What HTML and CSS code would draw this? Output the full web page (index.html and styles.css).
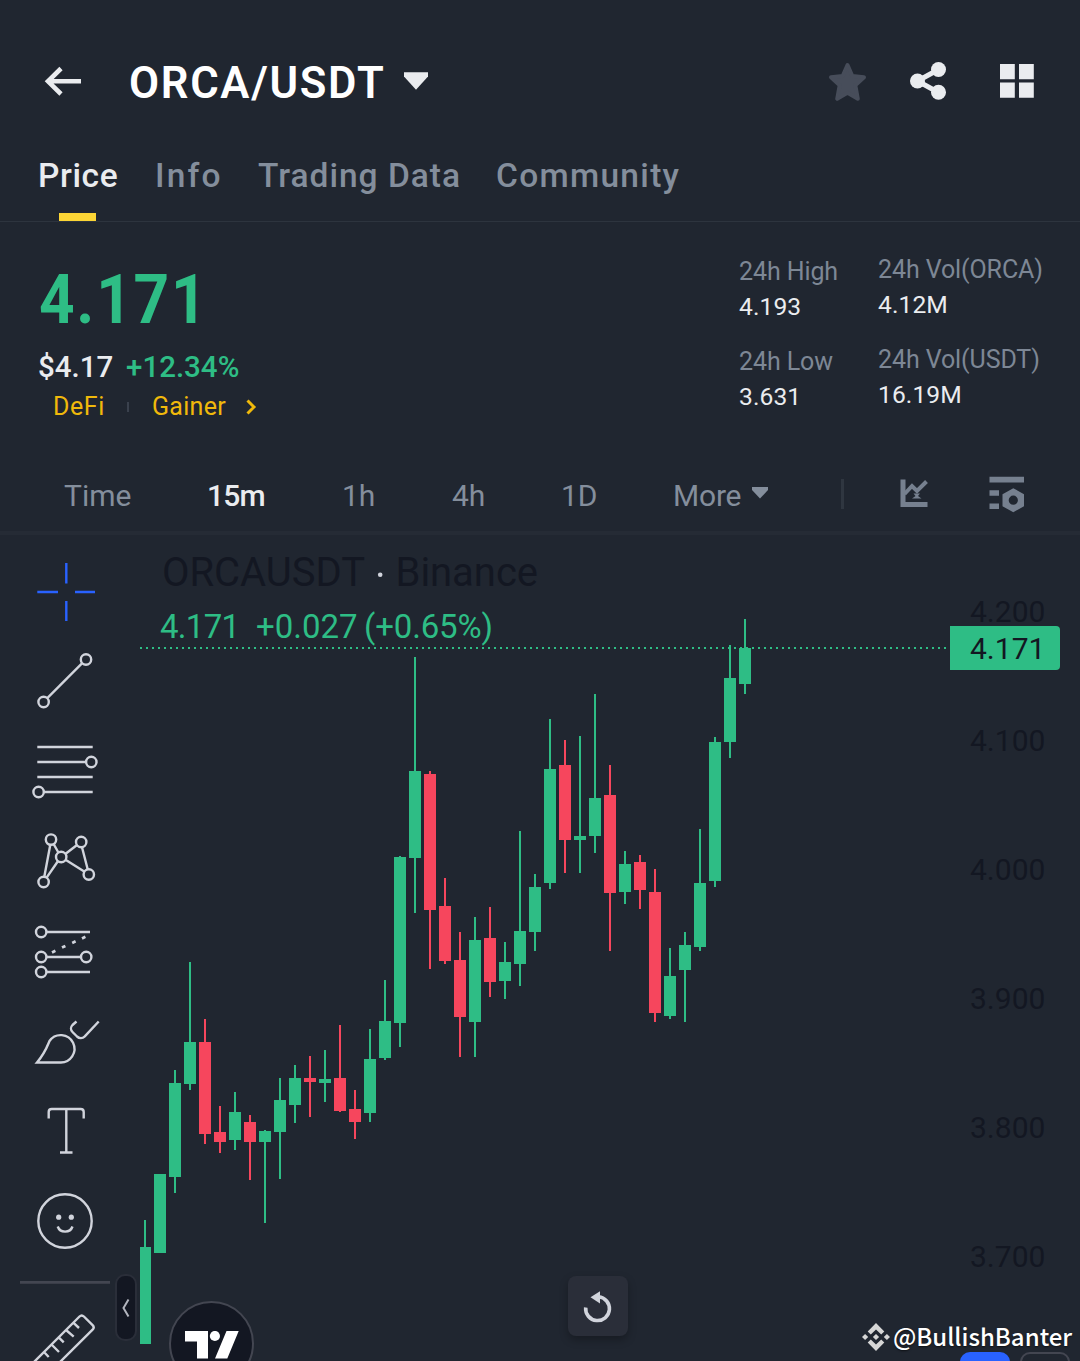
FILE: index.html
```html
<!DOCTYPE html>
<html lang="en">
<head>
<meta charset="utf-8">
<title>ORCA/USDT</title>
<link rel="stylesheet" href="styles.css">
</head>
<body>
<div class="app">
  <header class="topbar">
    <svg class="back" width="40" height="40" viewBox="43 62 40 40"><path d="M81 81.3H48M61 68.5L48 81.3L61 94" fill="none" stroke="#eaecef" stroke-width="4.6"/></svg>
    <h1 class="pair">ORCA/USDT</h1>
    <svg class="caret" width="26" height="40" viewBox="403 62 26 40"><path d="M404 72.2H428V76.5L416 89.8L404 76.5Z" fill="#eaecef"/></svg>
    <div class="actions">
      <svg width="40" height="40" viewBox="828 62 40 40"><path d="M847.5 65L852.3 76L864 77.2L855.3 85.2L857.8 98.8L847.5 92.8L837.2 98.8L839.7 85.2L831 77.2L842.7 76Z" fill="#474d5a" stroke="#474d5a" stroke-width="4" stroke-linejoin="round"/></svg>
      <svg width="40" height="40" viewBox="908 62 40 40"><path d="M938.5 69.5L917.5 81L938.5 92.5" fill="none" stroke="#eaecef" stroke-width="5"/><g fill="#eaecef"><circle cx="917.5" cy="81" r="7.5"/><circle cx="938.5" cy="69.5" r="7.5"/><circle cx="938.5" cy="92.3" r="7.5"/></g></svg>
      <svg width="40" height="40" viewBox="997 62 40 40"><path d="M1000 64H1014.8V79.2H1000ZM1019 64H1033.8V79.2H1019ZM1000 82.4H1014.8V97.7H1000ZM1019 82.4H1033.8V97.7H1019Z" fill="#eaecef"/></svg>
    </div>
  </header>

  <nav class="tabs">
    <span class="tab tab-on">Price</span>
    <span class="tab tab-info">Info</span>
    <span class="tab tab-data">Trading Data</span>
    <span class="tab tab-comm">Community</span>
  </nav>

  <section class="summary">
    <div class="quote">
      <div class="last">4.171</div>
      <div class="fiat"><span class="usd">$4.17</span><span class="chg">+12.34%</span></div>
      <div class="tags"><span class="defi">DeFi</span><i class="tick"></i><span class="gainer">Gainer</span><svg width="14" height="18" viewBox="0 0 14 18"><path d="M2.5 2.5L9 9L2.5 15.5" fill="none" stroke="#f0b90b" stroke-width="3"/></svg></div>
    </div>
    <dl class="stats">
      <div><dt>24h High</dt><dd>4.193</dd></div>
      <div><dt>24h Low</dt><dd>3.631</dd></div>
    </dl>
    <dl class="stats stats-vol">
      <div><dt>24h Vol(ORCA)</dt><dd>4.12M</dd></div>
      <div><dt>24h Vol(USDT)</dt><dd>16.19M</dd></div>
    </dl>
  </section>

  <nav class="intervals">
    <span class="i-time">Time</span>
    <span class="i-on">15m</span>
    <span>1h</span>
    <span>4h</span>
    <span>1D</span>
    <span class="i-more">More <svg width="18" height="14" viewBox="0 0 18 14"><path d="M1 1H17V4L9 12.5L1 4Z" fill="#848e9c"/></svg></span>
    <i class="bar"></i>
    <svg width="32" height="40" viewBox="899 476 32 40"><path d="M904 479.5V504.5H928.5" fill="none" stroke="#76808f" stroke-width="5"/><path d="M905.5 494L913 486L918 491L927.5 481.5" fill="none" stroke="#76808f" stroke-width="4"/><path d="M914.5 493.5H921L919 496L922.5 498.5H913L916.5 496Z" fill="#76808f"/></svg>
    <svg width="40" height="40" viewBox="988 476 40 40"><path d="M990.5 476.8H1025V482.6H990.5ZM990.5 490.3H1000V495.8H990.5ZM990.5 503.5H1000V509H990.5Z" fill="#76808f"/><path fill-rule="evenodd" d="M1014.3 488.2L1025 494.2V506.2L1014.3 512.3L1003.5 506.2V494.2ZM1014.3 495.6A4.6 4.6 0 1 0 1014.3 504.8A4.6 4.6 0 1 0 1014.3 495.6Z" fill="#76808f"/></svg>
  </nav>

  <main class="chart">
    <aside class="tools">
      <svg viewBox="0 547 140 90"><path class="cross" d="M66.3 563V583.5M66.3 601V621M37.3 592H58M75 592H95"/></svg>
      <svg viewBox="0 637 140 90"><path d="M47.3 698.2L82.2 663.1"/><circle cx="43.6" cy="702" r="5.2"/><circle cx="86" cy="659.5" r="5.2"/></svg>
      <svg viewBox="0 727 140 90"><path d="M37.3 747H92.7M37.3 762H86M37.3 777H92.7M44 792H92.7"/><circle cx="91.3" cy="762" r="5.2"/><circle cx="38.6" cy="792" r="5.2"/></svg>
      <svg viewBox="0 817 140 90"><path d="M50.3 844.8L44.3 876.8M53.6 844L58.4 852.5M57.9 861.3L46.6 877.6M65.3 854L76.7 845.2M82 847.2L87.7 869.3M65.5 859.8L84.2 871.6"/><circle cx="51" cy="839.6" r="5.2"/><circle cx="81.2" cy="842" r="5.2"/><circle cx="61.2" cy="857" r="5.2"/><circle cx="43.6" cy="882" r="5.2"/><circle cx="88.8" cy="874.5" r="5.2"/></svg>
      <svg viewBox="0 907 140 90"><path d="M46.5 932H90M46.5 957H81M46.5 972H90"/><path class="dots" d="M52 952.4L55.4 950.8M62 947.6L65.4 946M72.2 942.9L75.6 941.3M82 938.4L85.4 936.8"/><circle cx="41.2" cy="932" r="5.2"/><circle cx="41.2" cy="957" r="5.2"/><circle cx="86.2" cy="957" r="5.2"/><circle cx="41.2" cy="972" r="5.2"/></svg>
      <svg viewBox="0 997 140 90"><path d="M37 1062.5H60A13.7 13.7 0 1 0 49.5 1041C47 1047 45 1053 37 1062.5ZM76.500 1021.500L72.500 1025C70.500 1027 70.500 1030 72.500 1032L77 1036.500C79.300 1038.600 82.500 1038.600 84.800 1036.300L98.700 1021.500"/></svg>
      <svg viewBox="0 1087 140 90"><path d="M48.700 1118.500V1112Q48.700 1109 51.700 1109H80.700Q83.700 1109 83.700 1112V1118.500M66.300 1109V1152.500M60 1152.500H72.500"/></svg>
      <svg viewBox="0 1177 140 90"><circle cx="65" cy="1221" r="26.700"/><path d="M57.700 1226.500C60 1233.300 70.200 1233.300 72.500 1226.500"/><g class="eyes"><circle cx="58.700" cy="1217.200" r="2.600"/><circle cx="71.300" cy="1217.200" r="2.600"/></g></svg>
      <svg viewBox="0 1267 140 94"><path class="rule" d="M20 1282.300H110"/><path d="M30 1366L79.500 1316.500Q81.700 1314.300 83.900 1316.500L92.600 1325.200Q94.800 1327.400 92.600 1329.600L56 1366M73.300 1322.700L79 1328M66 1330L73.700 1336.700M58.700 1337.300L63.700 1342.300M51.500 1344.500L59 1352M44 1352L48.700 1357"/></svg>
    </aside>

    <svg class="plot" width="940" height="826" viewBox="140 535 940 826">
      <g class="legend">
        <text x="162" y="585.700" textLength="203" class="sym">ORCAUSDT</text>
        <circle cx="380.200" cy="574.700" r="2.300" fill="#d1d4dc"/>
        <text x="395.500" y="585.700" textLength="142.500" class="sym">Binance</text>
        <text x="160" y="637.700" textLength="80" class="up">4.171</text>
        <text x="256" y="637.700" textLength="101.500" class="up">+0.027</text>
        <text x="364" y="637.700" textLength="129" class="up">(+0.65%)</text>
      </g>
      <path d="M140 648H950" stroke="#2ebd85" stroke-width="2" stroke-dasharray="2 4"/>
      <g id="candles"></g>
      <g class="axis">
        <text x="970" y="622">4.200</text>
        <text x="970" y="751">4.100</text>
        <text x="970" y="880">4.000</text>
        <text x="970" y="1009">3.900</text>
        <text x="970" y="1138">3.800</text>
        <text x="970" y="1267">3.700</text>
        <path d="M950 626H1056Q1060 626 1060 630V666Q1060 670 1056 670H950Z" fill="#2ebd85"/>
        <text x="970" y="659">4.171</text>
      </g>
    </svg>

    <div class="handle"><svg width="10" height="20" viewBox="0 0 10 20"><path d="M7.500 1.500L2.500 10L7.500 18.500" fill="none" stroke="#b2b5be" stroke-width="2"/></svg></div>
    <div class="tv"><svg width="54" height="28" viewBox="185 1331 54 28"><path d="M185 1331H208V1358.500H197V1341.500H185ZM226.500 1331H238.700L227.300 1358.500H215Z" fill="#fff"/><circle cx="214.900" cy="1336" r="5.100" fill="#fff"/></svg></div>
    <div class="reset"><svg width="60" height="60" viewBox="568 1276 60 60"><path d="M585.700 1307.500A11.900 11.900 0 1 0 598.500 1296.800" fill="none" stroke="#d1d4dc" stroke-width="3.600"/><path d="M590.500 1297.200L600 1291.200V1303.500Z" fill="#d1d4dc"/></svg></div>
    <div class="btn btn-blue"></div>
    <div class="btn btn-line"></div>
    <div class="credit"><svg width="28" height="28" viewBox="0 0 28 28" fill="#d6d6d6"><path d="M14 0L22.300 8.500L19.200 11.600L14 6.400L8.800 11.600L5.700 8.500ZM14 28L22.300 19.500L19.200 16.400L14 21.600L8.800 16.400L5.700 19.500ZM3.100 10.900L6.200 14L3.100 17.100L0 14ZM24.900 10.900L28 14L24.900 17.100L21.800 14ZM14 10.900L17.100 14L14 17.100L10.900 14Z"/></svg><span>@BullishBanter</span></div>
  </main>
</div>
<script src="chart.js"></script>
</body>
</html>
```
FILE: styles.css
```css
* { box-sizing: border-box; }
body { margin: 0; background: #202630; font-family: Roboto, "Liberation Sans", sans-serif; }
svg { display: block; flex: none; }
.app { width: 1080px; height: 1361px; overflow: hidden; color: #eaecef; }

.topbar { display: flex; align-items: center; height: 140px; padding: 24px 43px 0; }
.pair { margin: 3px 0 0 46px; width: 274px; font-size: 43.600px; line-height: 60px; font-weight: 600; letter-spacing: 1.700px; color: #fff; white-space: nowrap; }
.actions { display: flex; gap: 40px; margin-left: auto; }
.actions svg:last-child { margin-left: 9px; }

.tabs { display: grid; grid-template-columns: 117px 103px 238px auto; height: 82px; padding-left: 38px; border-bottom: 1px solid #2d343e; }
.tab { position: relative; font-size: 33.500px; line-height: 72px; font-weight: 500; color: #848e9c; letter-spacing: .8px; white-space: nowrap; }
.tab-on { color: #eaecef; letter-spacing: .6px; }
.tab-info { letter-spacing: 2.200px; }
.tab-data { letter-spacing: 1px; }
.tab-comm { letter-spacing: 1.300px; }
.tab-on::after { content: ""; position: absolute; left: 21px; bottom: 0; width: 37px; height: 8px; background: #fcd535; }

.summary { display: flex; height: 238px; }
.quote { width: 739px; padding: 39px 0 0 38px; }
.last { width: max-content; font-size: 69px; line-height: 78px; font-weight: 700; letter-spacing: 2px; color: #2ebd85; transform: scaleX(.9); transform-origin: 0 50%; padding-left: 1px; }
.fiat { display: flex; margin-top: 6px; font-size: 29.500px; line-height: 44px; font-weight: 500; }
.usd { width: 88px; }
.chg { color: #2ebd85; }
.tags { display: flex; align-items: center; padding: 1px 0 0 15px; font-size: 25px; line-height: 34px; letter-spacing: .3px; color: #f0b90b; }
.defi { width: 74px; letter-spacing: .6px; }
.tick { width: 2px; height: 10px; margin-right: 23px; background: #3a414d; }
.gainer { width: 93px; }
.stats { display: flex; flex-direction: column; gap: 20px; width: 139px; margin: 0; padding-top: 32px; line-height: 35px; white-space: nowrap; }
.stats-vol { width: auto; padding-top: 30px; }
.stats dt { font-size: 25px; color: #7d8795; letter-spacing: -.1px; }
.stats dd { margin: 0; font-size: 24.600px; color: #eaecef; letter-spacing: .1px; }

.intervals { display: grid; align-items: center; grid-template-columns: 143px 135px 110px 109px 112px 168px 57px 89px 40px; height: 75px; padding-left: 64px; border-bottom: 4px solid #252b35; font-size: 30px; line-height: 71px; color: #848e9c; }
.i-on { font-weight: 500; letter-spacing: -.8px; color: #eaecef; }
.i-more { display: flex; align-items: center; gap: 10px; letter-spacing: -.2px; }
.i-more svg { margin-top: -6px; }
.bar { width: 3px; height: 30px; margin-top: -3px; background: #2f3640; }

.chart { position: relative; display: flex; height: 826px; }
.tools { width: 140px; padding-top: 12px; }
.tools svg { width: 140px; fill: none; stroke: #d1d4dc; stroke-width: 2.400; }
.tools .cross { stroke: #2962ff; }
.tools .dots { stroke-width: 2.800; }
.tools .eyes { fill: #d1d4dc; stroke: none; }
.tools .rule { stroke: #434651; stroke-width: 2.700; }
.sym { font-size: 40px; fill: #131722; }
.up { font-size: 33px; fill: #2ebd85; }
.axis { font-size: 30px; fill: #131722; }
.green { fill: #2ebd85; }
.red { fill: #f6465d; }

.handle { position: absolute; left: 115px; top: 739px; display: flex; align-items: center; justify-content: center; width: 22px; height: 67px; border: 2px solid #2a2e39; border-radius: 10px; background: #131722; }
.tv { position: absolute; left: 169px; top: 766px; width: 85px; height: 85px; padding: 28px 0 0 14px; border: 2.500px solid #434651; border-radius: 50%; background: #131722; }
.reset { position: absolute; left: 568px; top: 741px; width: 60px; height: 60px; border-radius: 8px; background: #2a2e39; box-shadow: 0 4px 8px rgba(0, 0, 0, .28); }
.btn { position: absolute; top: 817px; width: 50px; height: 40px; border-radius: 10px; }
.btn-blue { left: 960px; background: #2962ff; }
.btn-line { left: 1020px; border: 2px solid #434651; }
.credit { position: absolute; left: 862px; top: 784px; display: flex; align-items: center; gap: 3px; height: 36px; font: 500 24px/36px "Noto Sans CJK SC", sans-serif; color: #fff; text-shadow: 0 1px 2px rgba(0, 0, 0, .6); white-space: nowrap; }
.credit span { margin-top: -2px; }
```
FILE: chart.js
```js
// Each candle: high, body top, body bottom, low (plot y), 1 = rising, 0 = falling.
const candles = [
  [1220,1247,1344,1344,1],[1174,1174,1253,1253,1],[1070,1083,1177,1193,1],[962,1042,1084,1090,1],
  [1019,1042,1134,1144,0],[1106,1132,1142,1153,0],[1092,1112,1140,1150,1],[1115,1122,1142,1180,0],
  [1130,1131,1142,1223,1],[1078,1100,1132,1179,1],[1065,1078,1105,1123,1],[1056,1078,1082,1117,0],
  [1050,1079,1083,1102,1],[1025,1078,1111,1112,0],[1090,1109,1122,1139,0],[1029,1059,1113,1122,1],
  [980,1021,1058,1060,1],[856,857,1023,1047,1],[657,771,858,913,1],[771,774,910,969,0],
  [878,906,961,964,0],[932,960,1017,1057,0],[917,940,1022,1057,1],[907,938,982,997,0],
  [942,962,981,999,1],[831,931,964,986,1],[874,887,932,951,1],[719,769,883,889,1],
  [740,765,840,873,0],[736,836,840,873,1],[694,798,836,853,1],[765,795,893,951,0],
  [851,864,892,904,1],[855,862,890,909,0],[869,892,1013,1022,0],[948,976,1016,1019,1],
  [932,945,970,1022,1],[829,883,947,951,1],[737,742,881,887,1],[645,678,742,758,1],
  [619,648,684,694,1]
];
const layer = document.getElementById("candles");
candles.forEach(([high, top, bottom, low, up], i) => {
  const x = 145 + i * 15;
  const path = document.createElementNS("http://www.w3.org/2000/svg", "path");
  path.setAttribute("class", up ? "green" : "red");
  path.setAttribute("d", `M${x - 1} ${high}H${x + 1}V${low}H${x - 1}ZM${x - 6} ${top}H${x + 6}V${bottom}H${x - 6}Z`);
  layer.appendChild(path);
});
```
